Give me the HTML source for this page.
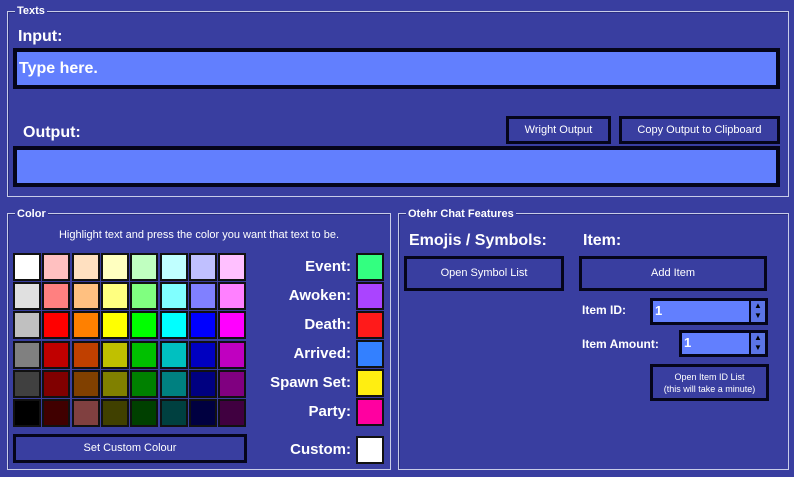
<!DOCTYPE html><html><head><style>
*{margin:0;padding:0;box-sizing:border-box}
body{width:794px;height:477px;background:#393ea0;position:relative;overflow:hidden;font-family:"Liberation Sans",sans-serif;color:#fff}
.a{position:absolute}
.g{position:absolute;border:1px solid #c8cce8;box-shadow:inset 1px 1px 0 #2a2e80}
.gl{position:absolute;background:#393ea0;font-size:11px;font-weight:bold;padding:0 2px;line-height:12px}
.lb{position:absolute;font-weight:bold;font-size:16px;line-height:18px}
.box{position:absolute;background:#627ffe;border:4px solid #05051a}
.btn{position:absolute;background:#393ea0;border:3px solid #05051a;font-size:11px;text-align:center;display:flex;align-items:center;justify-content:center;line-height:13px}
.c{position:absolute;width:28px;height:28px;border:2px solid #111}
.sl{position:absolute;right:443px;font-weight:bold;font-size:15px;line-height:18px;text-align:right}
.sw{position:absolute;left:356px;width:28px;height:28px;border:2px solid #111}
.sp{position:absolute;border:3px solid #05051a;background:#627ffe;font-size:13px;font-weight:bold;padding-left:2px;line-height:20px}
.sp i{position:absolute;right:0;top:0;width:16px;height:100%;background:#5b74e6;border-left:2px solid #05051a;font-style:normal;font-size:8px;line-height:10px;text-align:center;color:#000}
</style></head><body>
<div class="g" style="left:7px;top:11px;width:782px;height:186px"></div>
<div class="gl" style="left:15px;top:5px">Texts</div>
<div class="lb" style="left:18px;top:28px">Input:</div>
<div class="box" style="left:13px;top:48px;width:767px;height:41px;font-size:16px;font-weight:bold;padding-left:2px;line-height:33px">Type here.</div>
<div class="lb" style="left:23px;top:124px">Output:</div>
<div class="btn" style="left:506px;top:116px;width:105px;height:28px">Wright Output</div>
<div class="btn" style="left:619px;top:116px;width:161px;height:28px">Copy Output to Clipboard</div>
<div class="box" style="left:13px;top:146px;width:767px;height:41px"></div>

<div class="g" style="left:7px;top:213px;width:384px;height:257px"></div>
<div class="gl" style="left:15px;top:208px">Color</div>
<div class="a" style="left:7px;top:229px;width:384px;text-align:center;font-size:11px">Highlight text and press the color you want that text to be.</div>
<div id="grid"></div>
<div class="btn" style="left:13px;top:434px;width:234px;height:29px">Set Custom Colour</div>
<div class="sl" style="top:258px">Event:</div><div class="sw" style="top:253px;background:#33ff80"></div>
<div class="sl" style="top:287px">Awoken:</div><div class="sw" style="top:282px;background:#aa44ff"></div>
<div class="sl" style="top:316px">Death:</div><div class="sw" style="top:311px;background:#ff1a1a"></div>
<div class="sl" style="top:345px">Arrived:</div><div class="sw" style="top:340px;background:#3380ff"></div>
<div class="sl" style="top:374px">Spawn Set:</div><div class="sw" style="top:369px;background:#ffee11"></div>
<div class="sl" style="top:403px">Party:</div><div class="sw" style="top:398px;background:#ff00a0"></div>
<div class="sl" style="top:441px">Custom:</div><div class="sw" style="top:436px;background:#fff"></div>

<div class="g" style="left:398px;top:213px;width:391px;height:257px"></div>
<div class="gl" style="left:406px;top:208px">Otehr Chat Features</div>
<div class="lb" style="left:409px;top:232px">Emojis / Symbols:</div>
<div class="lb" style="left:583px;top:232px">Item:</div>
<div class="btn" style="left:404px;top:256px;width:160px;height:35px">Open Symbol List</div>
<div class="btn" style="left:579px;top:256px;width:188px;height:35px">Add Item</div>
<div class="a" style="left:582px;top:303px;font-size:12px;font-weight:bold">Item ID:</div>
<div class="sp" style="left:650px;top:298px;width:118px;height:27px">1<i>▲<br>▼</i></div>
<div class="a" style="left:582px;top:337px;font-size:12px;font-weight:bold">Item Amount:</div>
<div class="sp" style="left:679px;top:330px;width:89px;height:27px">1<i>▲<br>▼</i></div>
<div class="btn" style="left:650px;top:364px;width:119px;height:37px;font-size:9px;line-height:12px">Open Item ID List<br>(this will take a minute)</div>
<script>
var cols=[["#fff","#ffc0c0","#ffe0c0","#ffffc0","#c0ffc0","#c0ffff","#c0c0ff","#ffc0ff"],
["#e0e0e0","#ff8080","#ffc080","#ffff80","#80ff80","#80ffff","#8080ff","#ff80ff"],
["#c0c0c0","#f00","#ff8000","#ff0","#0f0","#0ff","#00f","#f0f"],
["#808080","#c00000","#c04000","#c0c000","#00c000","#00c0c0","#0000c0","#c000c0"],
["#404040","#800000","#804000","#808000","#008000","#008080","#000080","#800080"],
["#000","#400000","#804040","#404000","#004000","#004040","#000040","#400040"]];
var h="";for(var r=0;r<6;r++)for(var c=0;c<8;c++)h+='<div class="c" style="left:'+(13+c*29.3)+'px;top:'+(253+r*29.2)+'px;background:'+cols[r][c]+'"></div>';
document.getElementById("grid").innerHTML=h;
</script>
</body></html>
